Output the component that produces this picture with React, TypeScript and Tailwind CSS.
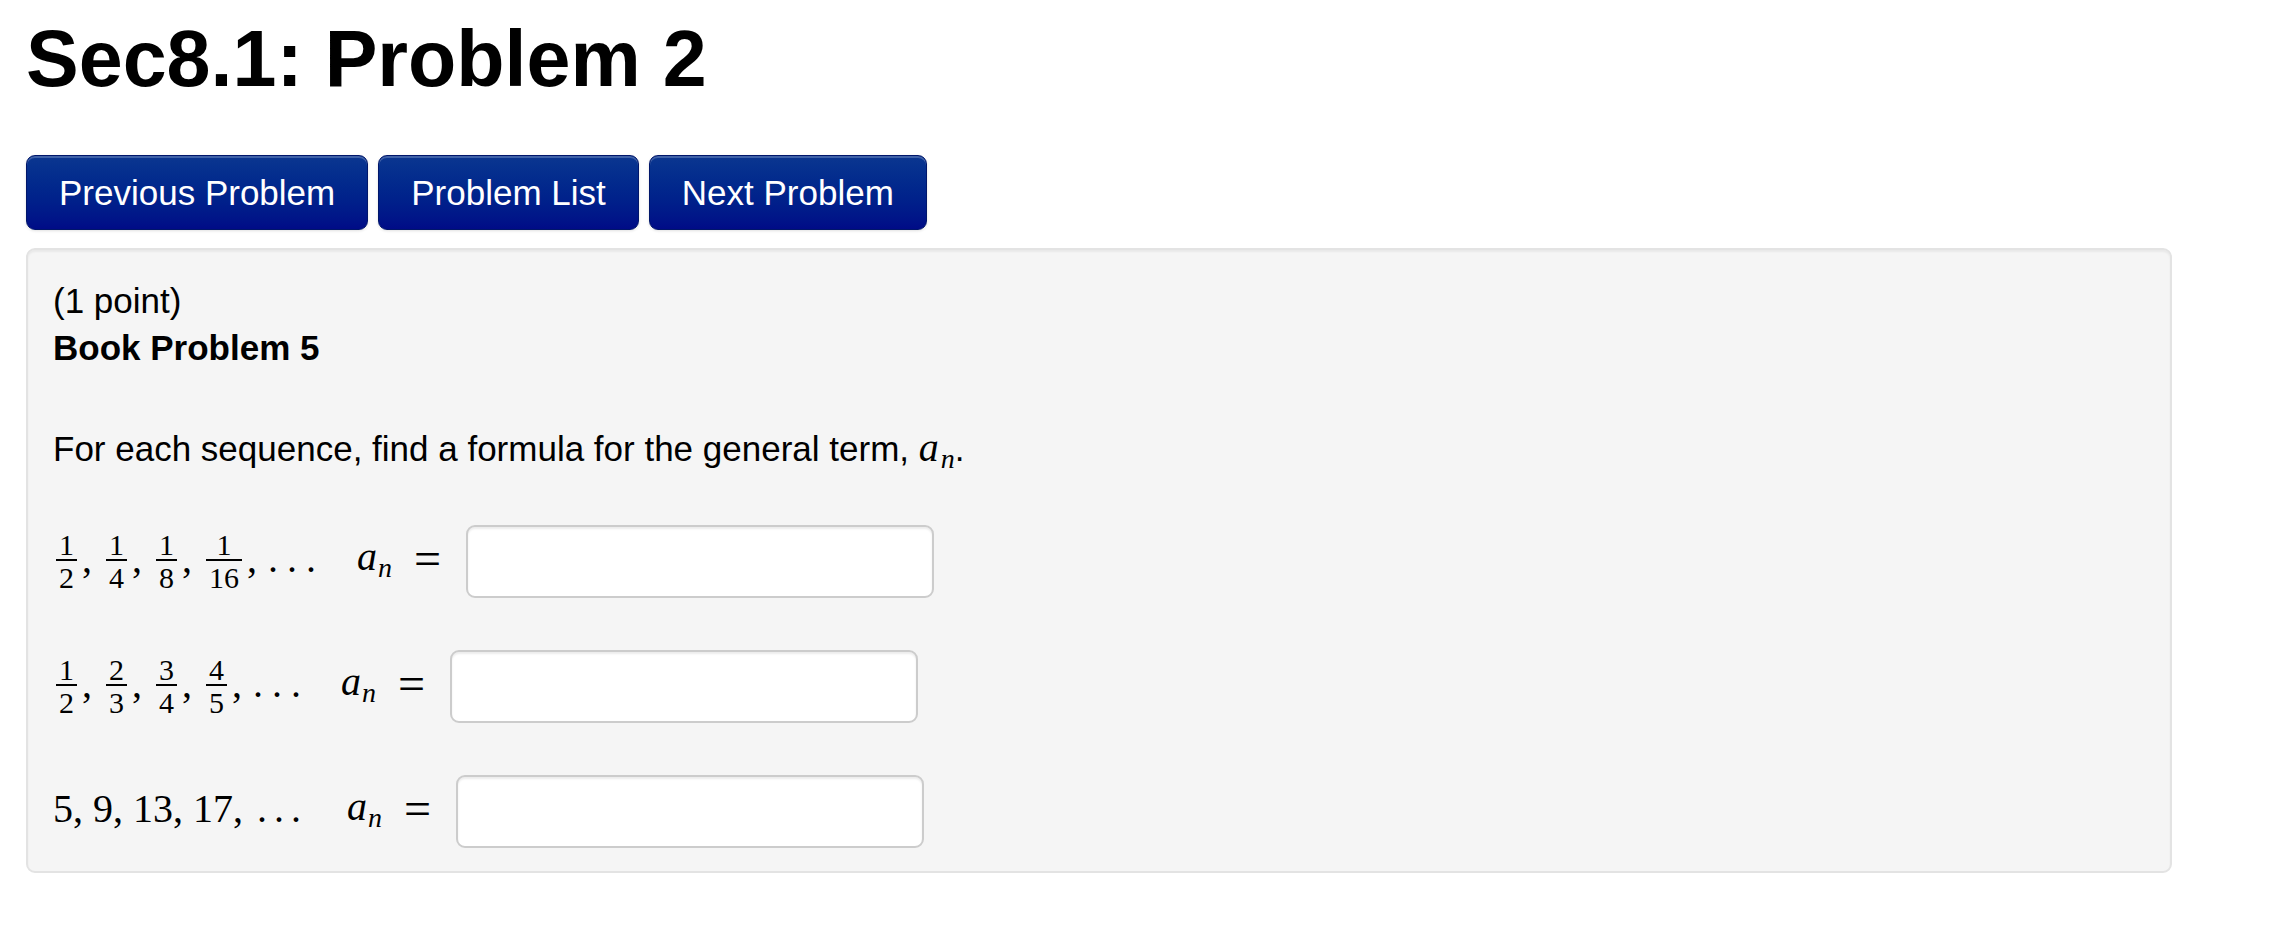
const serif = "font-['Liberation_Serif','Times_New_Roman',serif]";
const mathText = `${serif} text-[40px] leading-[44px] pb-[6px]`;

function Frac({ num, den, width }: { num: string; den: string; width: string }) {
  return (
    <span className={`${serif} ${width} flex shrink-0 flex-col items-center pt-[3.5px] pb-[4px]`}>
      <span className="text-[30px] leading-[20px] mb-[4px]">{num}</span>
      <span className="h-[2px] w-full bg-black" />
      <span className="text-[30px] leading-[20px] mt-[7px]">{den}</span>
    </span>
  );
}

function Comma({ width }: { width: string }) {
  return <span className={`${mathText} ${width} shrink-0 pl-[5px]`}>,</span>;
}

function Dots({ gap }: { gap: string }) {
  return (
    <span className={`flex shrink-0 ${gap}`}>
      <span className={`${mathText} w-[10px]`}>.</span>
      <span className={`${mathText} w-[10px]`}>.</span>
      <span className={`${mathText} w-[10px]`}>.</span>
    </span>
  );
}

function An() {
  return (
    <span className={`${mathText} w-[57px] shrink-0 italic`}>
      a<span className="ml-[1px] text-[28px] leading-none align-[-7px]">n</span>
    </span>
  );
}

function AnswerRow({ seqWidth, children }: { seqWidth: string; children: React.ReactNode }) {
  return (
    <div className="mt-[52px] flex h-[73px] items-center">
      <div className={`flex shrink-0 items-center ${seqWidth}`}>{children}</div>
      <An />
      <span className={`${serif} text-[48px] leading-[48px] pb-[6px] w-[52px] shrink-0`}>=</span>
      <input
        type="text"
        className="h-[73px] w-[468px] shrink-0 rounded-[9px] border-2 border-[#cccccc] bg-white shadow-[inset_0_2px_2px_rgba(0,0,0,0.075)] outline-none"
      />
    </div>
  );
}

function NavButton({ label }: { label: string }) {
  return (
    <button className="flex h-[75px] items-center rounded-[9px] border border-[#00166a] bg-linear-to-b from-[#0b3690] to-[#000b87] px-[32px] text-[35px] leading-[47px] text-white shadow-[inset_0_2px_0_rgba(255,255,255,0.22),0_1px_3px_rgba(0,0,0,0.12)]">
      {label}
    </button>
  );
}

export default function App() {
  return (
    <div className="min-h-screen bg-white pl-[26px] font-['Liberation_Sans',Arial,sans-serif] text-black">
      <h1 className="mt-[14px] text-[79px] font-bold leading-[89px]">Sec8.1: Problem 2</h1>

      {/* Navigation */}
      <div className="mt-[52px] flex gap-[10px]">
        <NavButton label="Previous Problem" />
        <NavButton label="Problem List" />
        <NavButton label="Next Problem" />
      </div>

      {/* Problem body */}
      <div className="mt-[18px] w-[2146px] rounded-[9px] border-2 border-[#e3e3e3] bg-[#f5f5f5] pt-[27px] pb-[23px] pl-[25px] text-[35px] leading-[47px] shadow-[inset_0_2px_2px_rgba(0,0,0,0.05)]">
        <p>(1 point)</p>
        <p className="font-bold">Book Problem 5</p>
        <p className="mt-[54px]">
          For each sequence, find a formula for the general term,{' '}
          <span className={`${serif} text-[40px] leading-none italic`}>
            a<span className="ml-[2px] text-[28px] leading-none align-[-7px]">n</span>
          </span>
          .
        </p>

        <AnswerRow seqWidth="w-[304px]">
          <span className="w-[3px] shrink-0" />
          <Frac num="1" den="2" width="w-[21px]" />
          <Comma width="w-[29px]" />
          <Frac num="1" den="4" width="w-[21px]" />
          <Comma width="w-[29px]" />
          <Frac num="1" den="8" width="w-[21px]" />
          <Comma width="w-[29px]" />
          <Frac num="1" den="16" width="w-[36px]" />
          <Comma width="w-[26px]" />
          <Dots gap="gap-[9px]" />
        </AnswerRow>

        <AnswerRow seqWidth="w-[288px]">
          <span className="w-[3px] shrink-0" />
          <Frac num="1" den="2" width="w-[21px]" />
          <Comma width="w-[29px]" />
          <Frac num="2" den="3" width="w-[21px]" />
          <Comma width="w-[29px]" />
          <Frac num="3" den="4" width="w-[21px]" />
          <Comma width="w-[29px]" />
          <Frac num="4" den="5" width="w-[21px]" />
          <Comma width="w-[26px]" />
          <Dots gap="gap-[9px]" />
        </AnswerRow>

        <AnswerRow seqWidth="w-[294px]">
          <span className={`${mathText} w-[40px] shrink-0`}>5,</span>
          <span className={`${mathText} w-[40px] shrink-0`}>9,</span>
          <span className={`${mathText} w-[60px] shrink-0`}>13,</span>
          <span className={`${mathText} w-[64px] shrink-0`}>17,</span>
          <Dots gap="gap-[7px]" />
        </AnswerRow>
      </div>
    </div>
  );
}
